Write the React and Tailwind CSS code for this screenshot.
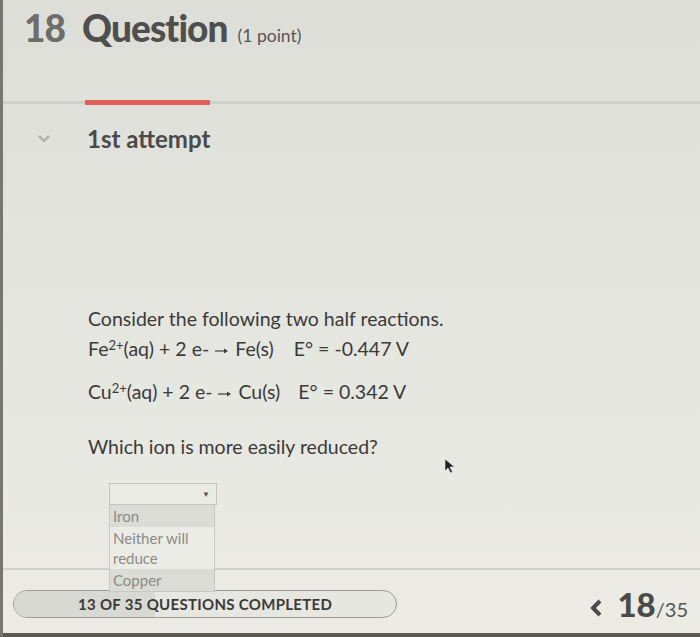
import { useState } from 'react'

const OPTIONS = [
  { id: 'iron', label: 'Iron', hl: true },
  { id: 'neither', label: 'Neither will reduce', hl: false },
  { id: 'copper', label: 'Copper', hl: true },
]

function Cursor() {
  return (
    <svg width="12" height="16" viewBox="0 0 12 16" className="absolute left-[441px] top-[458px]">
      <path d="M1 1 L1 13 L4 10 L6.5 15 L8.5 14 L6 9 L10.5 9 Z" fill="#222" stroke="#eee" strokeWidth="0.6" />
    </svg>
  )
}

function Arrow() {
  return (
    <svg width="14" height="8" viewBox="0 0 14 8" className="inline-block mx-[6px] align-middle">
      <path d="M0 4 H10" stroke="#3f3f3d" strokeWidth="1.2" />
      <path d="M9 1.5 L13 4 L9 6.5 Z" fill="#3f3f3d" />
    </svg>
  )
}

export default function App() {
  const [open] = useState(true)

  return (
    <div
      className="relative w-[700px] h-[637px] overflow-hidden border-l-[3px] border-[#77776f] bg-gradient-to-b from-[#dedeD9] via-[#e6e6e1] to-[#ecece5] text-[#444]"
      style={{ fontFamily: 'Lato, "Open Sans", sans-serif' }}
    >
      {/* Header */}
      <div className="flex items-baseline pl-[21px] pt-0 h-[100px]">
        <span className="text-[37px] font-black text-[#6d6d6a] tracking-tight">18</span>
        <span className="ml-[17px] text-[37px] font-black text-[#4f4f4d] tracking-tight">Question</span>
        <span className="ml-[10px] text-[17.5px] text-[#555]">(1 point)</span>
      </div>

      {/* Divider with red marker */}
      <div className="relative h-[8px]">
        <div className="absolute left-0 right-0 top-[1px] h-[3px] bg-[#cfcfca]" />
        <div className="absolute left-[82px] w-[125px] top-0 h-[5px] bg-[#e35d5d]" />
      </div>

      {/* Attempt */}
      <div className="flex items-center mt-[16px] h-[30px]">
        <svg width="14" height="10" viewBox="0 0 14 10" className="ml-[34px]">
          <path d="M2 2 L7 7 L12 2" fill="none" stroke="#b4b4b0" strokeWidth="2.6" />
        </svg>
        <span className="ml-[36px] text-[24px] font-bold text-[#4a4a48]">1st attempt</span>
      </div>

      {/* Question */}
      <div className="pl-[85px] mt-[150px] text-[19.5px] text-[#3a3a38] leading-[30px]">
        <p>Consider the following two half reactions.</p>
        <p>
          Fe<sup className="text-[13px]">2+</sup>(aq) + 2 e-<Arrow />Fe(s)
          <span className="ml-[20px]">E° = -0.447 V</span>
        </p>
        <p className="mt-[13px]">
          Cu<sup className="text-[13px]">2+</sup>(aq) + 2 e-<Arrow />Cu(s)
          <span className="ml-[18px]">E° = 0.342 V</span>
        </p>
        <p className="mt-[25px]">Which ion is more easily reduced?</p>

        {/* Select */}
        <div className="relative mt-[21px] ml-[21px] w-[108px]">
          <div className="h-[22px] border border-[#c4c4be] bg-[#ebebe6] flex items-center justify-end pr-[6px]">
            <span className="text-[8px] text-[#555]">▼</span>
          </div>
          {open && (
            <div className="absolute z-10 left-0 top-[22px] w-[106px] border-l border-r border-b border-[#c8c8c2] bg-[#ecece7] text-[15px] leading-[20px] text-[#8a8a86]">
              {OPTIONS.map((o) => (
                <div key={o.id} className={`px-[3px] py-[1px] ${o.hl ? 'bg-[#dcdcd6]' : ''}`}>
                  {o.label}
                </div>
              ))}
            </div>
          )}
        </div>
      </div>

      {/* Footer divider */}
      <div className="absolute left-0 right-0 top-[568px] h-[2px] bg-[#d2d2cc]" />

      {/* Footer */}
      <div className="absolute left-0 right-0 top-[590px] flex items-start justify-between pl-[10px] pr-[12px]">
        <div className="relative w-[384px] h-[28px] rounded-full border-[1.5px] border-[#9c9c98] bg-[#e7e7e2] overflow-hidden flex items-center">
          <div className="absolute left-0 top-0 bottom-0 w-[37%] bg-[#d9d9d4]" />
          <span className="relative ml-[64px] text-[15px] font-bold tracking-[0.3px] text-[#3a3a38]">
            13 OF 35 QUESTIONS COMPLETED
          </span>
        </div>
        <div className="flex items-center gap-[14px] -mt-[6px]">
          <svg width="14" height="20" viewBox="0 0 14 20">
            <path d="M11 3 L4 10 L11 17" fill="none" stroke="#4a4a48" strokeWidth="4" />
          </svg>
          <span className="leading-[40px]">
            <span className="text-[33px] font-black text-[#4a4a48]">18</span>
            <span className="text-[20px] text-[#555]">/35</span>
          </span>
        </div>
      </div>

      {/* Bottom bezel */}
      <div className="absolute left-0 right-0 bottom-0 h-[4px] bg-[#5b5a55]" />

      <Cursor />
    </div>
  )
}
